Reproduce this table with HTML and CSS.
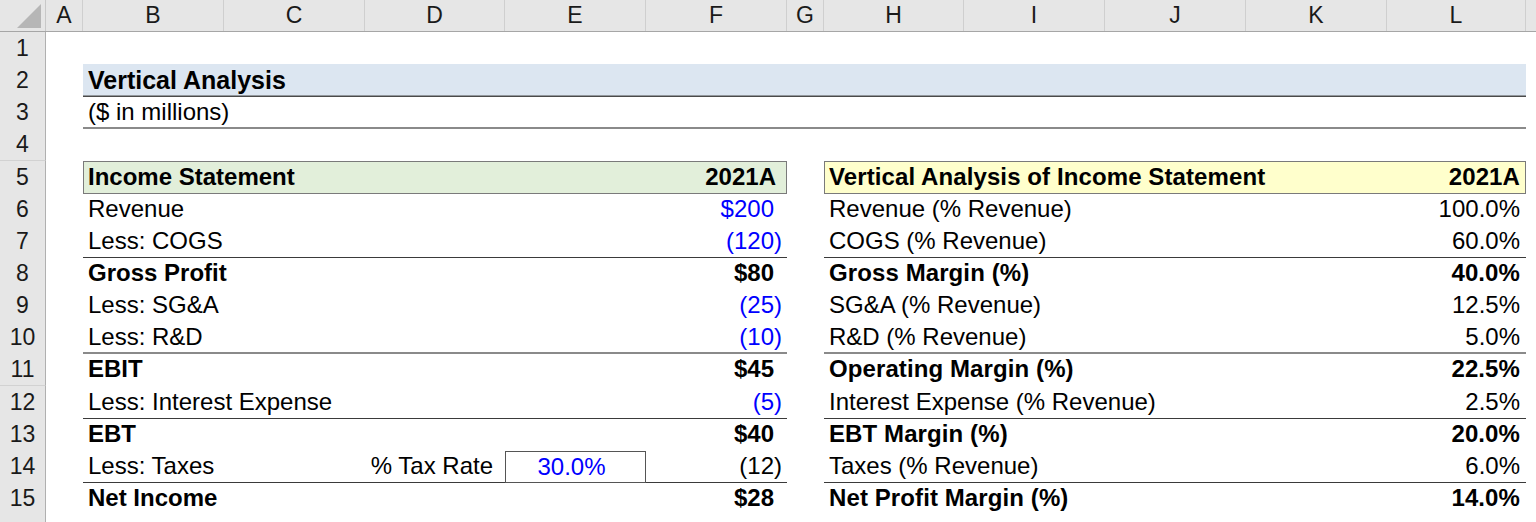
FILE: index.html
```html
<!DOCTYPE html>
<html lang="en">
<head>
<meta charset="utf-8">
<title>Vertical Analysis</title>
<link rel="stylesheet" href="styles.css">
</head>
<body>
<div class="sheet">
  <div class="row colhead">
    <div class="corner"><span class="tri"></span></div>
    <div class="ch">A</div><div class="ch">B</div><div class="ch">C</div><div class="ch">D</div><div class="ch">E</div><div class="ch">F</div>
    <div class="ch">G</div><div class="ch">H</div><div class="ch">I</div><div class="ch">J</div><div class="ch">K</div><div class="ch">L</div><div class="ch last"></div>
  </div>

  <div class="row"><div class="rh">1</div></div>

  <div class="row">
    <div class="rh">2</div>
    <div class="title">Vertical Analysis</div>
  </div>

  <div class="row">
    <div class="rh">3</div>
    <div class="subtitle">($ in millions)</div>
  </div>

  <div class="row"><div class="rh">4</div></div>

  <div class="row">
    <div class="rh">5</div>
    <div class="lt head green"><span class="lbl b">Income Statement</span><span class="val b pos">2021A</span></div>
    <div class="rt head yellow"><span class="lbl b">Vertical Analysis of Income Statement</span><span class="val b">2021A</span></div>
  </div>

  <div class="row">
    <div class="rh">6</div>
    <div class="lt"><span class="lbl">Revenue</span><span class="val pos blue">$200</span></div>
    <div class="rt"><span class="lbl">Revenue (% Revenue)</span><span class="val">100.0%</span></div>
  </div>

  <div class="row">
    <div class="rh">7</div>
    <div class="lt line"><span class="lbl">Less: COGS</span><span class="val neg blue">(120)</span></div>
    <div class="rt line"><span class="lbl">COGS (% Revenue)</span><span class="val">60.0%</span></div>
  </div>

  <div class="row">
    <div class="rh">8</div>
    <div class="lt"><span class="lbl b">Gross Profit</span><span class="val pos b">$80</span></div>
    <div class="rt"><span class="lbl b">Gross Margin (%)</span><span class="val b">40.0%</span></div>
  </div>

  <div class="row">
    <div class="rh">9</div>
    <div class="lt"><span class="lbl">Less: SG&amp;A</span><span class="val neg blue">(25)</span></div>
    <div class="rt"><span class="lbl">SG&amp;A (% Revenue)</span><span class="val">12.5%</span></div>
  </div>

  <div class="row">
    <div class="rh">10</div>
    <div class="lt line2"><span class="lbl">Less: R&amp;D</span><span class="val neg blue">(10)</span></div>
    <div class="rt line2"><span class="lbl">R&amp;D (% Revenue)</span><span class="val">5.0%</span></div>
  </div>

  <div class="row">
    <div class="rh">11</div>
    <div class="lt"><span class="lbl b">EBIT</span><span class="val pos b">$45</span></div>
    <div class="rt"><span class="lbl b">Operating Margin (%)</span><span class="val b">22.5%</span></div>
  </div>

  <div class="row">
    <div class="rh">12</div>
    <div class="lt line"><span class="lbl">Less: Interest Expense</span><span class="val neg blue">(5)</span></div>
    <div class="rt line"><span class="lbl">Interest Expense (% Revenue)</span><span class="val">2.5%</span></div>
  </div>

  <div class="row">
    <div class="rh">13</div>
    <div class="lt"><span class="lbl b">EBT</span><span class="val pos b">$40</span></div>
    <div class="rt"><span class="lbl b">EBT Margin (%)</span><span class="val b">20.0%</span></div>
  </div>

  <div class="row">
    <div class="rh">14</div>
    <div class="lt line">
      <span class="lbl short">Less: Taxes</span>
      <span class="taxlbl">% Tax Rate</span>
      <span class="taxbox blue">30.0%</span>
      <span class="val neg">(12)</span>
    </div>
    <div class="rt line"><span class="lbl">Taxes (% Revenue)</span><span class="val">6.0%</span></div>
  </div>

  <div class="row">
    <div class="rh">15</div>
    <div class="lt"><span class="lbl b">Net Income</span><span class="val pos b">$28</span></div>
    <div class="rt"><span class="lbl b">Net Profit Margin (%)</span><span class="val b">14.0%</span></div>
  </div>

  <div class="row"><div class="rh"></div></div>
</div>
</body>
</html>
```

FILE: styles.css
```css
* { box-sizing: border-box; }

html, body {
  margin: 0;
  padding: 0;
  background: #ffffff;
  overflow: hidden;
}

body {
  font-family: "Liberation Sans", Arial, sans-serif;
  font-size: 24px;
  color: #000;
}

.sheet {
  --cols: 46px 37px 141px 141px 140px 141px 141px 37px 140px 141px 141px 141px 139px 1fr;
  width: 1536px;
}

.row {
  display: grid;
  grid-template-columns: var(--cols);
  height: 32.15px;
  line-height: 32px;
  white-space: nowrap;
}

/* column header */
.colhead {
  height: 32px;
  background: #e6e6e6;
  border-bottom: 1px solid #a6a6a6;
}

.corner {
  position: relative;
  border-right: 1px solid #c8c8c8;
}

.tri {
  position: absolute;
  right: 4px;
  bottom: 3px;
  width: 0;
  height: 0;
  border-left: 24px solid transparent;
  border-bottom: 24px solid #b6b6b6;
}

.ch {
  text-align: center;
  font-size: 23px;
  line-height: 31px;
  color: #1a1a1a;
  border-right: 1px solid #cfcfcf;
}

.ch.last { border-right: none; }

/* row header */
.rh {
  grid-column: 1;
  background: #e6e6e6;
  text-align: center;
  font-size: 23px;
  color: #1a1a1a;
  border-bottom: 1px solid #d2d2d2;
  border-right: 1px solid #b0b0b0;
}

/* title rows */
.title {
  grid-column: 3 / 14;
  background: #dce6f1;
  font-weight: bold;
  font-size: 25px;
  padding-left: 5px;
  box-shadow: inset 0 -1.5px 0 #4a4a4a;
}

.subtitle {
  grid-column: 3 / 14;
  padding-left: 5px;
  box-shadow: inset 0 -2px 0 #8a8a8a;
}

/* left table */
.lt {
  grid-column: 3 / 8;
  display: grid;
  grid-template-columns: 141px 141px 140px 141px 141px;
}

.lt .lbl {
  grid-column: 1 / 4;
  grid-row: 1;
  padding-left: 5px;
}

.lt .lbl.short {
  grid-column: 1 / 3;
}

.lt .val {
  grid-column: 5;
  grid-row: 1;
  text-align: right;
}

.lt .val.pos { padding-right: 13px; }
.lt .val.neg { padding-right: 5px; }

.lt .taxlbl {
  grid-column: 3;
  grid-row: 1;
  text-align: right;
  padding-right: 12px;
}

.taxbox {
  grid-column: 4;
  grid-row: 1;
  text-align: center;
  padding-right: 8px;
  border: 1px solid #555;
  line-height: 30px;
  margin-top: 1px;
}

/* right table */
.rt {
  grid-column: 9 / 14;
  display: flex;
  justify-content: space-between;
  padding-left: 5px;
  padding-right: 6px;
}

.rt .b { letter-spacing: 0.1px; }

.head {
  border: 1px solid #7a7a7a;
  line-height: 30px;
}

.lt.head .lbl { padding-left: 4px; }
.lt.head .val.pos { padding-right: 12px; }

.rt.head { padding-left: 4px; padding-right: 5px; }

.green { background: #e2efda; }
.yellow { background: #ffffcc; }

.line { box-shadow: inset 0 -1px 0 #3a3a3a; }
.line2 { box-shadow: inset 0 -2px 0 #8a8a8a; }

.b { font-weight: bold; }
.blue { color: #0000ff; }
```
